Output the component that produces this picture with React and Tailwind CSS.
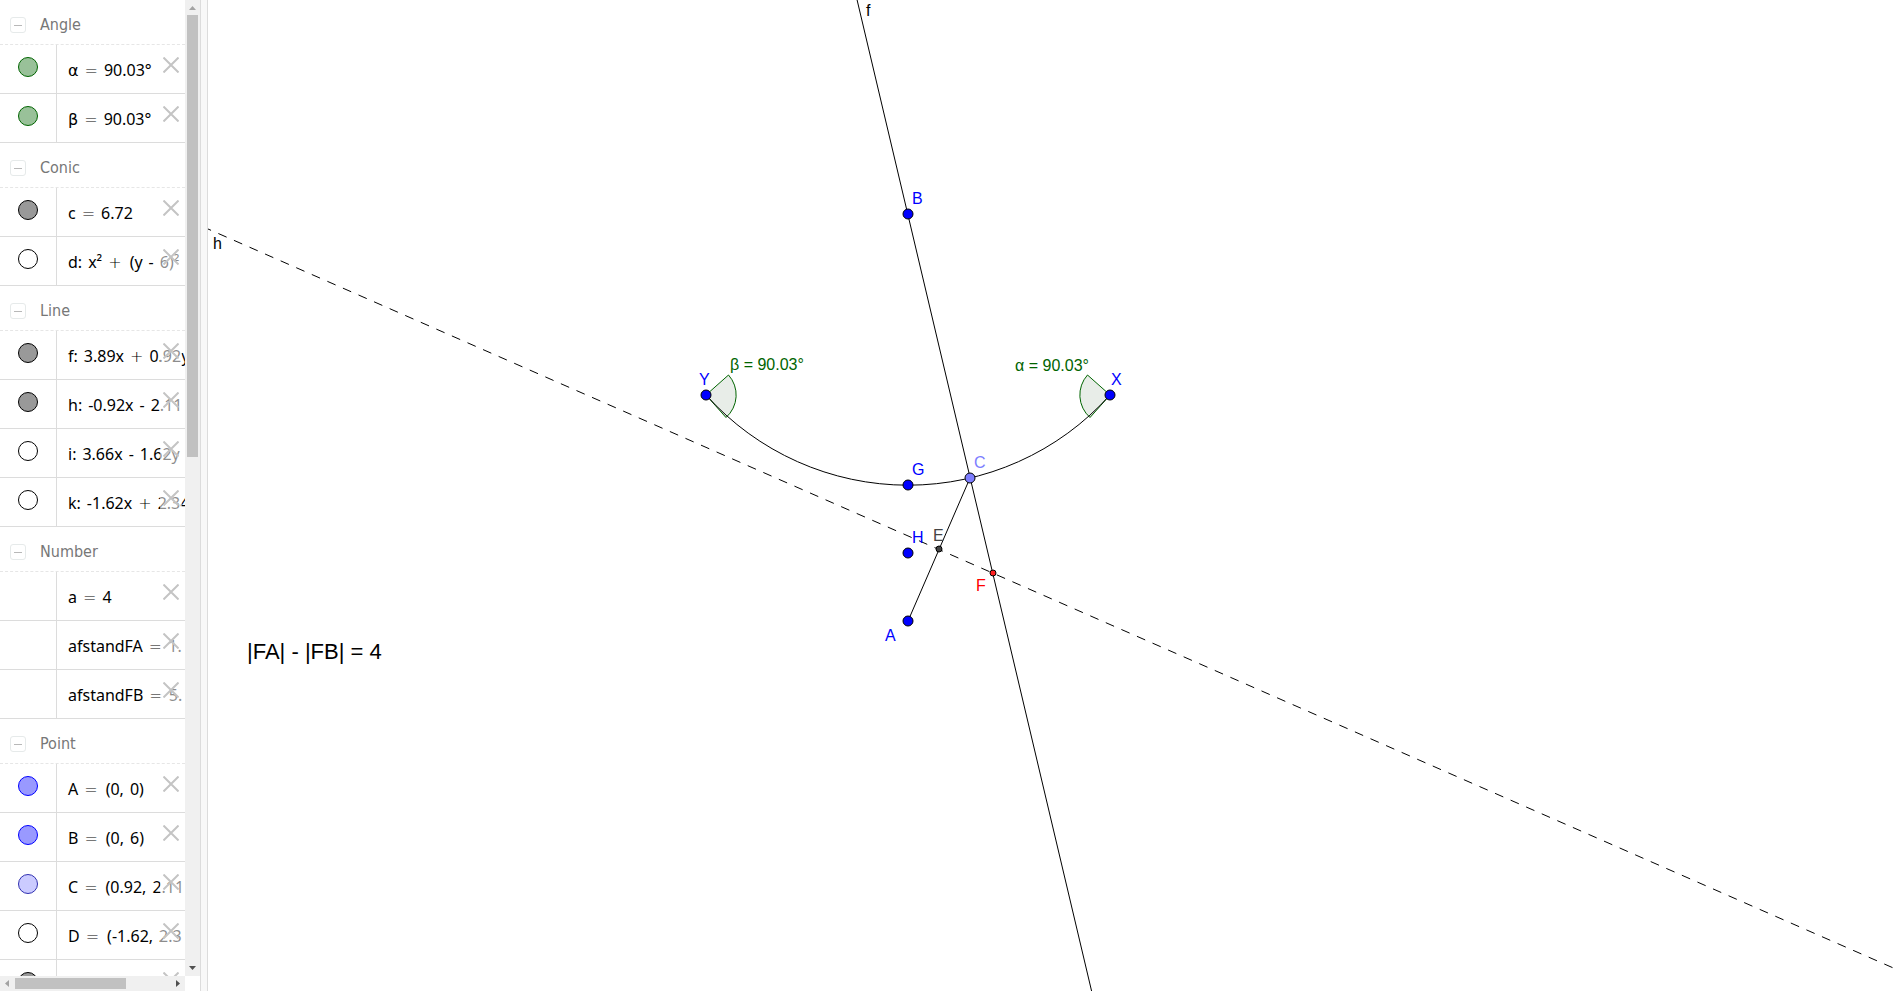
import { useState } from "react";

const groups = [
  {
    title: "Angle",
    items: [
      { text: "α = 90.03°", marble: "green" },
      { text: "β = 90.03°", marble: "green" },
    ],
  },
  {
    title: "Conic",
    items: [
      { text: "c = 6.72", marble: "gray" },
      { text: "d: x² + (y - 6)²", marble: "hidden" },
    ],
  },
  {
    title: "Line",
    items: [
      { text: "f: 3.89x + 0.92y", marble: "gray" },
      { text: "h: -0.92x - 2.11", marble: "gray" },
      { text: "i: 3.66x - 1.62y", marble: "hidden" },
      { text: "k: -1.62x + 2.34", marble: "hidden" },
    ],
  },
  {
    title: "Number",
    items: [{ text: "a = 4" }, { text: "afstandFA = 1." }, { text: "afstandFB = 5." }],
  },
  {
    title: "Point",
    items: [
      { text: "A = (0, 0)", marble: "blue" },
      { text: "B = (0, 6)", marble: "blue" },
      { text: "C = (0.92, 2.11", marble: "lightblue" },
      { text: "D = (-1.62, 2.3", marble: "hidden" },
      { text: "", marble: "gray" },
    ],
  },
];

const marbleStyles = {
  green: "border-[#006400] bg-[#99c199]",
  gray: "border-black bg-[#999999]",
  hidden: "border-black bg-white",
  blue: "border-[#0000ff] bg-[#9999ff]",
  lightblue: "border-[#3030b0] bg-[#cbcbff]",
};

const points = [
  { label: "Y", x: 498, y: 395, lx: 491, ly: 385, r: 5, fill: "#0000ff", color: "#0000ff" },
  { label: "X", x: 902, y: 395, lx: 903, ly: 385, r: 5, fill: "#0000ff", color: "#0000ff" },
  { label: "B", x: 700, y: 214, lx: 704, ly: 204, r: 5, fill: "#0000ff", color: "#0000ff" },
  { label: "G", x: 700, y: 485, lx: 704, ly: 475, r: 5, fill: "#0000ff", color: "#0000ff" },
  { label: "C", x: 762, y: 478, lx: 766, ly: 468, r: 5, fill: "#7d7dff", color: "#7d7dff" },
  { label: "H", x: 700, y: 553, lx: 704, ly: 543, r: 5, fill: "#0000ff", color: "#0000ff" },
  { label: "E", x: 731, y: 549, lx: 725, ly: 541, r: 3, fill: "#444444", color: "#444444" },
  { label: "F", x: 785, y: 573, lx: 768, ly: 591, r: 3, fill: "#ff2020", color: "#ff0000" },
  { label: "A", x: 700, y: 621, lx: 677, ly: 641, r: 5, fill: "#0000ff", color: "#0000ff" },
];

const tokenStyle = (token) => {
  if (token === "=" || token === "+") {
    return "font-['DejaVu_Sans',sans-serif] font-extralight";
  }
  if (token === "α" || token === "β") {
    return "font-['DejaVu_Sans',sans-serif]";
  }
  return token.startsWith("(") ? "pl-0.5" : "";
};

const AlgebraRow = ({ item }) => {
  const [visible, setVisible] = useState(true);

  return (
    <li className="relative flex h-[49px] border-b border-[#dcdcdc]">
      <div className="flex w-[57px] shrink-0 justify-center border-r border-[#dcdcdc] pt-3">
        {item.marble && (
          <button
            type="button"
            aria-label="Show or hide"
            aria-pressed={visible}
            onClick={() => setVisible(!visible)}
            className={`h-5 w-5 rounded-full border ${
              visible ? marbleStyles[item.marble] : marbleStyles.hidden
            }`}
          />
        )}
      </div>
      <div className="flex items-baseline gap-1.5 whitespace-nowrap pt-[13px] pl-[11px] font-['Noto_Sans',sans-serif] text-base leading-6 text-black">
        {item.text.split(" ").map((token, index) => (
          <span key={index} className={tokenStyle(token)}>
            {token}
          </span>
        ))}
      </div>
      <button
        type="button"
        aria-label="Delete"
        className="absolute top-0 right-[3px] flex h-12 w-[22px] justify-center bg-white/55 pt-3"
      >
        <svg width="16" height="16" viewBox="0 0 16 16" stroke="#c4c4c4" strokeWidth="2">
          <path d="M0.5 0.5 15.5 15.5M15.5 0.5 0.5 15.5" />
        </svg>
      </button>
    </li>
  );
};

const AlgebraGroup = ({ group }) => {
  const [open, setOpen] = useState(true);

  return (
    <section>
      <div className="flex h-[45px] items-center gap-[14px] border-b border-dashed border-[#e6e6e6] pt-1.5 pl-[10px]">
        <button
          type="button"
          aria-label={`Collapse ${group.title}`}
          aria-expanded={open}
          onClick={() => setOpen(!open)}
          className="flex h-4 w-4 items-center justify-center rounded-[3px] border border-[#e6eaea]"
        >
          <span className="h-px w-2 bg-[#b8b8b8]" />
        </button>
        <h2 className="font-['DejaVu_Sans_Condensed','DejaVu_Sans',sans-serif] text-base leading-6 text-[#777777]">
          {group.title}
        </h2>
      </div>
      {open && (
        <ul>
          {group.items.map((item, index) => (
            <AlgebraRow key={index} item={item} />
          ))}
        </ul>
      )}
    </section>
  );
};

const VerticalScrollbar = () => (
  <div className="flex w-[15px] shrink-0 flex-col items-center bg-[#f0f0f0]">
    <svg width="15" height="15" viewBox="0 0 15 15" fill="#a3a3a3" className="shrink-0">
      <path d="M4 10 7.5 6 11 10Z" />
    </svg>
    <div className="h-[45.3%] w-[11px] bg-[#c1c1c1]" />
    <svg width="15" height="15" viewBox="0 0 15 15" fill="#505050" className="mt-auto shrink-0">
      <path d="M4 5 7.5 9 11 5Z" />
    </svg>
  </div>
);

const HorizontalScrollbar = () => (
  <div className="mr-[15px] flex h-[15px] shrink-0 items-center bg-[#f0f0f0]">
    <svg width="15" height="15" viewBox="0 0 15 15" fill="#a3a3a3" className="shrink-0">
      <path d="M9 4 5 7.5 9 11Z" />
    </svg>
    <div className="h-[11px] w-3/5 bg-[#c1c1c1]" />
    <svg width="15" height="15" viewBox="0 0 15 15" fill="#505050" className="ml-auto shrink-0">
      <path d="M6 4 10 7.5 6 11Z" />
    </svg>
  </div>
);

const GraphicsView = () => (
  <svg
    className="h-full min-w-0 flex-1 bg-white font-['Liberation_Sans',Arial,sans-serif] text-base"
    role="img"
    aria-label="Graphics view"
  >
    {/* angle sectors */}
    <g fill="#e8ede8" stroke="#006400">
      <path d="M498 395 520.5 375A30 30 0 0 1 518 417.5Z" />
      <path d="M902 395 879.5 375A30 30 0 0 0 882 417.5Z" />
    </g>

    <g fill="none" stroke="#000000">
      {/* arc with centre B */}
      <path d="M498 395A271.3 271.3 0 0 0 902 395" />
      <path d="M649.1 0 884.3 994" />
      <path d="M700 621 762 478" />
      <path d="M-5.2 226.7 1687 968.7" strokeDasharray="9 8" />
    </g>

    {points.map((p) => (
      <g key={p.label}>
        <circle cx={p.x} cy={p.y} r={p.r} fill={p.fill} stroke="#000000" />
        <text x={p.lx} y={p.ly} fill={p.color}>
          {p.label}
        </text>
      </g>
    ))}

    <text x="658" y="16">f</text>
    <text x="5" y="249">h</text>
    <text x="522" y="370" fill="#006400">β = 90.03°</text>
    <text x="807" y="371" fill="#006400">α = 90.03°</text>
    <text x="39" y="659" className="text-[22px]">|FA| - |FB| = 4</text>
  </svg>
);

const App = () => {
  return (
    <div className="flex h-screen overflow-hidden bg-white pb-0.5">
      <aside className="flex w-[200px] shrink-0 flex-col">
        <div className="flex min-h-0 flex-1">
          <div className="min-w-0 flex-1 overflow-hidden">
            {groups.map((group) => (
              <AlgebraGroup key={group.title} group={group} />
            ))}
          </div>
          <VerticalScrollbar />
        </div>
        <HorizontalScrollbar />
      </aside>
      <div className="w-2 shrink-0 border-x border-[#dcdcdc] bg-[#f8f8f8]" />
      <GraphicsView />
    </div>
  );
};

export default App;
